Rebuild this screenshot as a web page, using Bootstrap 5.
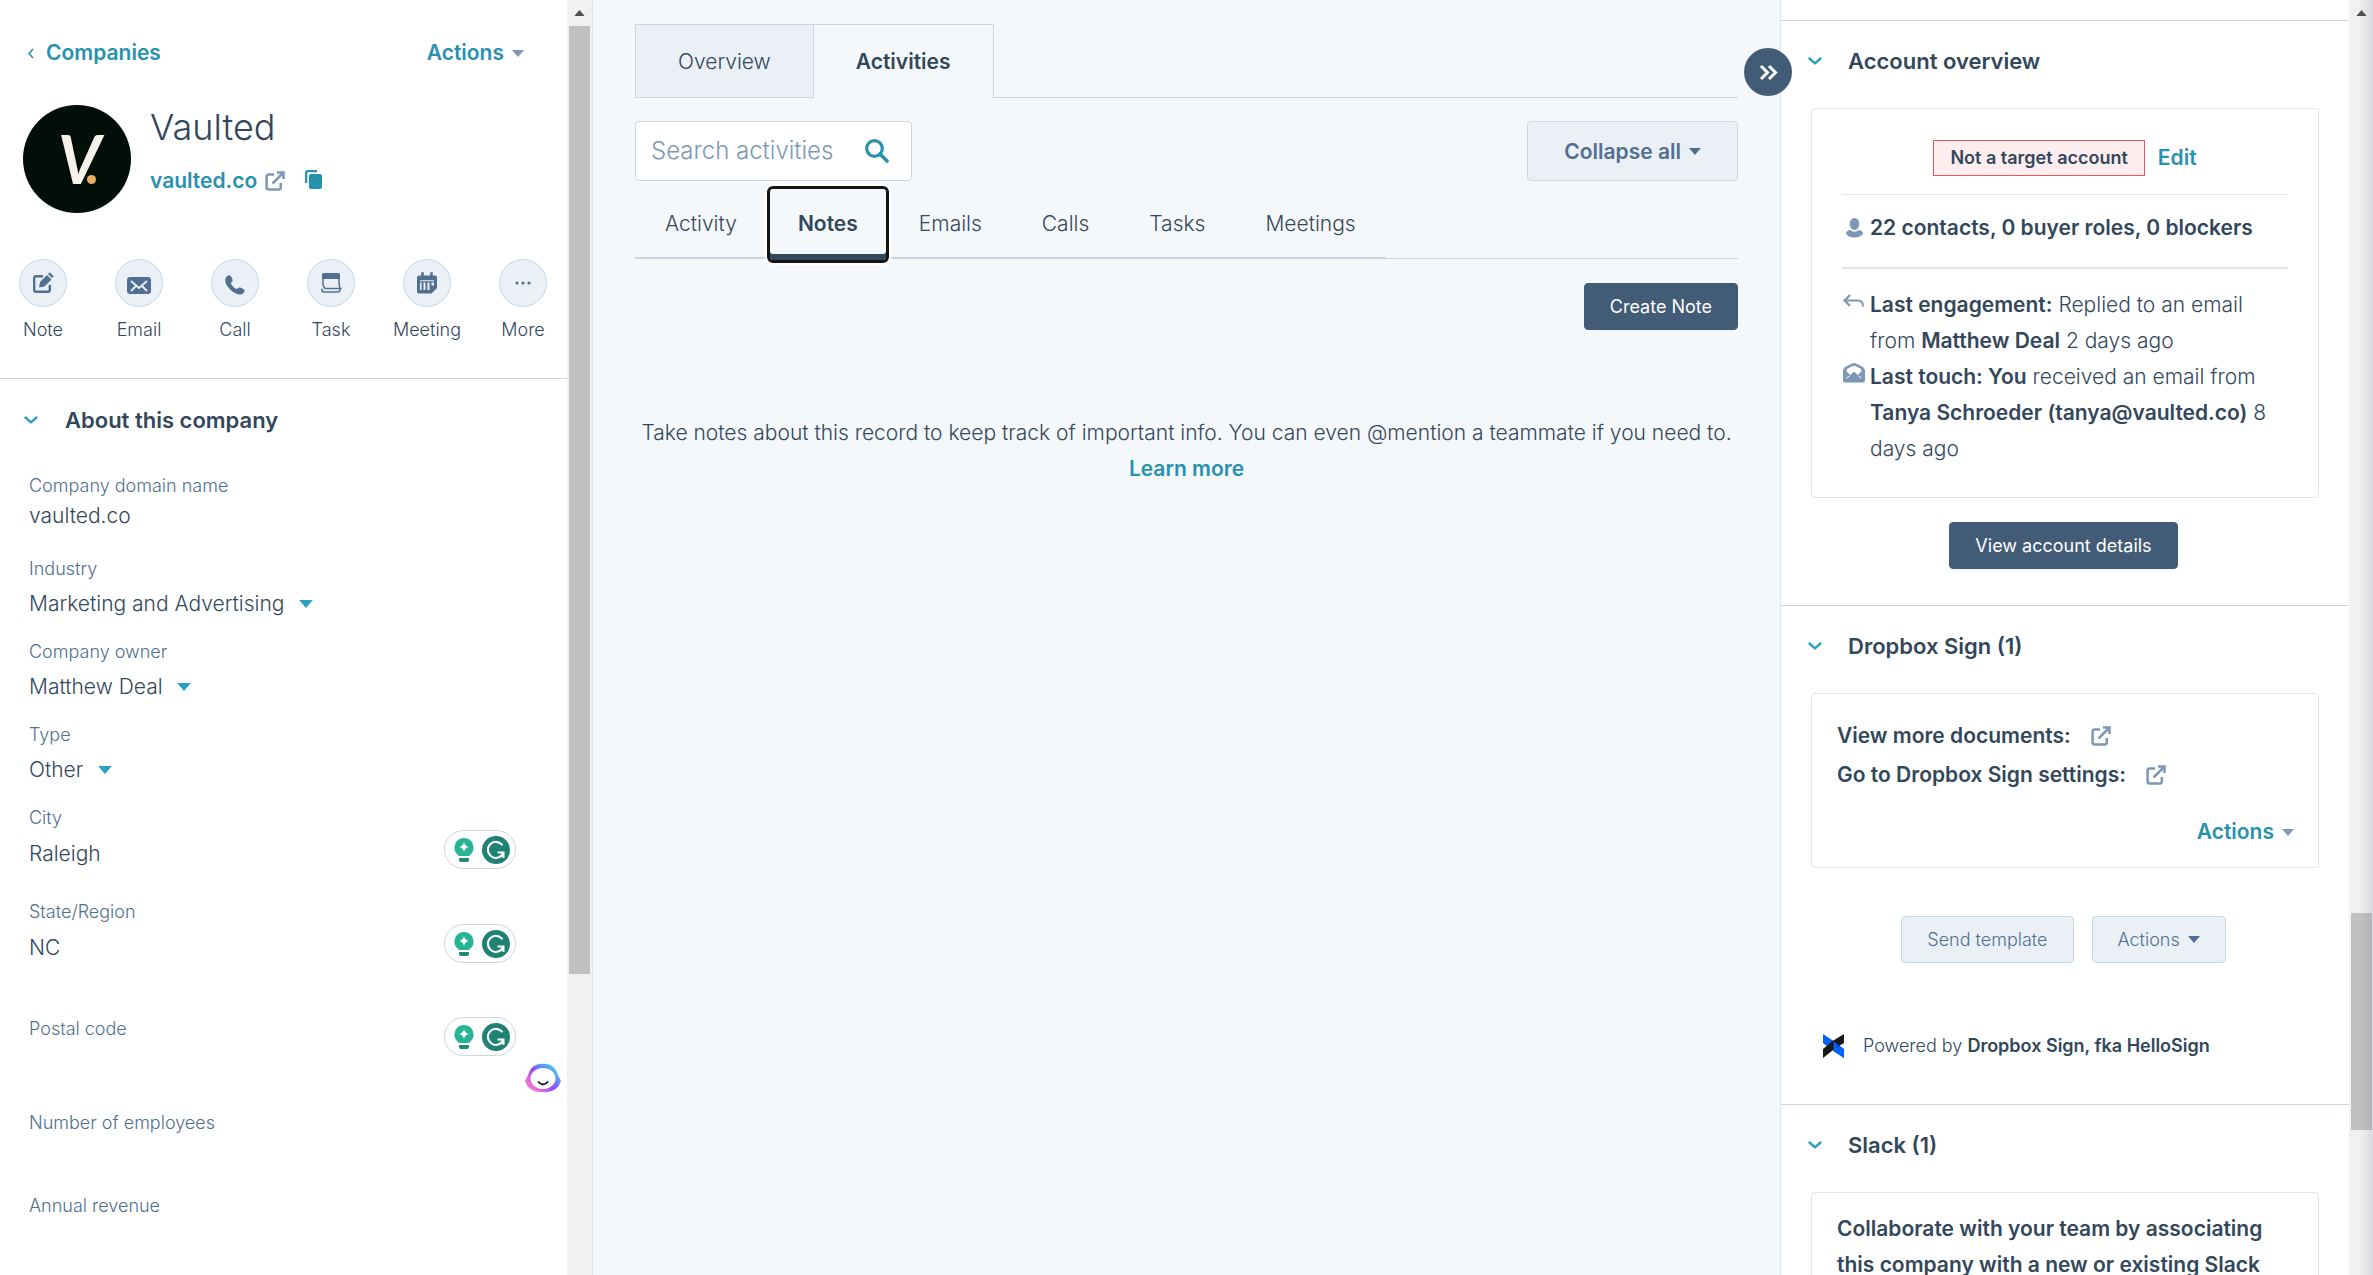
<!DOCTYPE html>
<html lang="en">
<head>
<meta charset="utf-8">
<meta name="viewport" content="width=device-width, initial-scale=1">
<title>Vaulted – Company record</title>
<link href="https://cdn.jsdelivr.net/npm/bootstrap@5.3.0/dist/css/bootstrap.min.css" rel="stylesheet">
<style>
:root{--ink:#33475b;--teal:#2791ae;--muted:#516f90;--line:#cbd6e2;--soft:#dfe3eb;--pale:#eaf0f6;--dark:#425b76;--icon:#7c98b6}
body{font-family:Inter,"Open Sans",sans-serif;font-size:21px;line-height:36px;font-weight:300;color:var(--ink);background:#f5f8fa;overflow:hidden}
b,.strong{font-weight:600}
svg{display:block;flex:none}
a{color:var(--teal);font-weight:600;text-decoration:none}
h1,h2{margin:0;color:var(--ink)}
h1{font-size:36px;line-height:44px;font-weight:300}
h2{font-size:22px;line-height:36px;font-weight:600}
.btn{font-size:18px;line-height:23px;font-weight:300;padding:11px 25px;border-radius:4px;border-width:1px}
.btn-slate{background:var(--dark);border-color:var(--dark);color:#fff;font-weight:400}
.btn-pale{background:var(--pale);border-color:var(--line);color:var(--muted)}
.btn-big{font-size:21px;font-weight:600;padding:17px 36px}
.plain{background:none;border:0;padding:0;color:var(--teal);font-weight:600}
.left-panel{width:567px;background:#fff}
.right-panel{width:569px;background:#fff;padding-top:20px}
.track{width:25px;background:#f1f1f1;padding:0 2px}
.track svg{margin:10px auto}
.track.shaded{width:24px;padding:0 1px 0 2px;background:linear-gradient(90deg,#f1f1f1 40%,#d9dadd)}
.thumb{background:#c1c1c1}
.left-thumb{height:948px}
.right-thumb{height:217px;margin-top:897px;background:linear-gradient(90deg,#c1c1c1 40%,#b2b3b5)}
.edge{border-left:1px solid var(--soft)}
.top-row{padding:35px 43px 0 28px}
.identity{padding:34px 23px 0;gap:19px}
.site{margin-top:14px}
.site .copy{margin-left:20px}
.avatar{width:108px;height:108px;background:#020e08;color:#f6f1eb;font:italic 700 66px/108px Lato,sans-serif;text-align:center;border-radius:50%}
.avatar i{display:inline-block;width:9px;height:9px;border-radius:50%;background:#e8ae5f;margin-left:-14px}
.quick{padding:46px 0 31px}
.quick li{width:96px;flex:none}
.quick button{width:100%;border:0;background:none;padding:0;color:var(--ink);font-size:18px;line-height:24px;font-weight:300}
.disc{width:48px;height:48px;border:1px solid var(--line);border-radius:50%;background:var(--pale);color:#516f90;margin-bottom:11px}
.quick-wrap{margin-left:-5px}
.about{border-top:1px solid var(--line);padding:23px 24px 0}
.about h2{margin-left:27px}
.fields{padding:36px 51px 0 29px}
.field{height:83px}
.field.tall{height:94px}
.field.taller{height:117px}
.field label,.field .name{display:block;font-size:18px;line-height:24px;color:var(--muted)}
.field .value{line-height:30px;margin-top:3px}
.field select,.field input{border:0;padding:0;background:none;color:var(--ink);font-weight:300;font-size:21px;line-height:30px;height:30px;appearance:none;outline:0}
.field input{flex:1 1 0;min-width:0;margin-top:9px}
.field .pick{margin-top:8px;gap:14px}
.pill{width:72px;height:39px;border:1px solid var(--line);border-radius:20px;background:#fff;gap:8px;padding:0 3px 0 9px}
.helper{position:absolute;left:525px;top:1063px}
.center{padding:24px 42px 0}
.tab-bar{height:74px}
.tab-bar a{border:1px solid var(--line);padding:19px 42px 0;color:var(--ink);font-weight:300}
.tab-bar a:first-child{background:var(--pale)}
.tab-bar a.on{border-left:0;border-bottom:0;font-weight:600}
.tab-bar span{border-bottom:1px solid var(--line)}
.tools{margin-top:23px}
.search{width:277px;height:60px;background:#fff;border:1px solid var(--line);border-radius:4px;padding:0 22px 0 15px}
.search input{border:0;background:none;outline:0;min-width:0;flex:1;font-size:24px;font-weight:300;padding:0;color:var(--ink)}
.search input::placeholder{color:var(--icon);opacity:1}
.sub-tabs{margin-top:5px;height:73px;border-bottom:1px solid var(--line)}
.sub-tabs nav{border-bottom:1px solid var(--line)}
.sub-tabs a{color:var(--ink);font-weight:300;padding:20px 30px 0;height:77px}
.sub-tabs a.on{font-weight:600;border:3px solid #141414;border-radius:6px;padding:17px 28px 0;box-shadow:inset 0 -6px #33475b,0 0 0 2px #fff;background:#f5f8fa;z-index:1}
.empty{margin:85px -20px 0}
.toggle{position:absolute;left:-37px;top:48px;width:48px;height:48px;border:0;border-radius:50%;background:var(--dark);z-index:2}
.section{padding:22px 30px 0 27px;border-top:1px solid var(--line)}
.section h2{margin-left:26px}
.panel{border:1px solid var(--soft);border-radius:4px;margin:29px 0 0 3px}
.panel.account{padding:31px 30px 30px}
.panel.docs{padding:22px 24px 17px 25px;line-height:39px;font-weight:600}
.panel.docs .line{gap:20px}
.panel.docs .more{margin-top:20px;line-height:36px}
.panel.slack{padding:18px 25px;font-weight:600}
.badge-row{gap:13px}
.target{border:1px solid #f2545b;background:#fdedee;font-size:18px;line-height:34px;font-weight:600;padding:0 16px}
.rule{border-top:1px solid var(--soft);margin:18px 0 15px}
.rule.thick{border-width:2px;margin:21px 0 18px}
.item{gap:4px}
.item .glyph{width:24px;flex:none;display:flex;justify-content:center;height:36px;align-items:center}
.item .glyph.up{height:28px}
.after-account{padding:24px 0 36px}
.doc-buttons{padding:48px 0 71px;gap:18px}
.powered{font-size:18px;line-height:24px;padding:0 15px 46px;gap:19px}
</style>
</head>
<body class="d-flex vh-100 position-relative">
<svg width="0" height="0" class="position-absolute" aria-hidden="true">
<symbol id="chev" viewBox="0 0 14 8"><path d="M1.500 1.500 7 6.300l5.500-4.800" fill="none" stroke="#2a9fc0" stroke-width="2.400" stroke-linecap="round" stroke-linejoin="round"/></symbol>
<symbol id="tri" viewBox="0 0 12 7"><path d="M0 0h12L6 7z" fill="currentColor"/></symbol>
<symbol id="up" viewBox="0 0 12 7"><path d="M0 7h12L6 0z" fill="currentColor"/></symbol>
<symbol id="ext" viewBox="0 0 20 20"><path d="M9 3.600H3.400a1.800 1.800 0 0 0-1.800 1.800v11.200a1.800 1.800 0 0 0 1.800 1.800H14a1.800 1.800 0 0 0 1.800-1.800v-4.600M7.500 12.500 17.500 2.500M12 1.600h6.500v6.500" fill="none" stroke="#7c98b6" stroke-width="2.500"/></symbol>
<symbol id="bulb" viewBox="0 0 20 28"><path d="M10 2a9.500 9.500 0 0 1 5.500 17.200V20h-11v-.8A9.500 9.500 0 0 1 10 2z" fill="#27b496"/><path d="M5 22h10v2q0 2-2 2H7q-2 0-2-2z" fill="#208c76"/><path d="M10 6q.8 4.200 5 5-4.200.8-5 5-.8-4.200-5-5 4.200-.8 5-5z" fill="#fff"/></symbol>
<symbol id="gee" viewBox="0 0 28 28"><circle cx="14" cy="14" r="14" fill="#208275"/><path d="M20.500 9.300A8 8 0 1 0 21.300 17M15.500 16.500h6V22" fill="none" stroke="#fff" stroke-width="2"/></symbol>
</svg>

<aside class="left-panel flex-shrink-0">
  <div class="top-row d-flex justify-content-between align-items-center">
    <a href="#" class="d-flex align-items-center"><svg width="6" height="11" viewBox="0 0 6 11" class="me-2"><path d="M5 1 1 5.500 5 10" fill="none" stroke="#2791ae" stroke-width="1.600"/></svg><span class="ms-1">Companies</span></a>
    <button class="plain d-flex align-items-center gap-2">Actions <svg width="12" height="7" color="#7c98b6"><use href="#tri"/></svg></button>
  </div>
  <div class="identity d-flex">
    <div class="avatar">V<i></i></div>
    <div>
      <h1>Vaulted</h1>
      <div class="site d-flex align-items-center"><a href="#">vaulted.co</a><svg width="20" height="20" class="ms-2"><use href="#ext"/></svg><svg width="17" height="19" viewBox="0 0 17 19" class="copy mb-1"><path d="M1.200 13V2.500Q1.200 1.200 2.500 1.200H12" fill="none" stroke="#2791ae" stroke-width="2.200"/><rect x="4" y="4" width="13" height="15" rx="2" fill="#2791ae"/></svg></div>
    </div>
  </div>
  <div class="quick-wrap">
  <ul class="quick list-unstyled d-flex m-0 text-center">
    <li><button><span class="disc d-flex align-items-center justify-content-center mx-auto"><svg width="22" height="22" viewBox="0 0 22 22"><path d="M11 4.200H4.200a2 2 0 0 0-2 2v11.600a2 2 0 0 0 2 2h11.600a2 2 0 0 0 2-2V13" fill="none" stroke="currentColor" stroke-width="2.400"/><path d="M7 15.500 8 10l7-7 4.500 4.500-7 7z" fill="currentColor"/><path d="m16 2 1.700-1.700 4 4L20 6z" fill="currentColor"/></svg></span>Note</button></li>
    <li><button><span class="disc d-flex align-items-center justify-content-center mx-auto"><svg width="24" height="17" viewBox="0 0 24 17" class="mt-1"><rect width="24" height="17" rx="3" fill="currentColor"/><path d="m4 4 8 7 8-7M4 14l5-5M20 14l-5-5" fill="none" stroke="#eaf0f6" stroke-width="1.800"/></svg></span>Email</button></li>
    <li><button><span class="disc d-flex align-items-center justify-content-center mx-auto"><svg width="20" height="20" viewBox="0 0 20 20" class="mt-1"><path d="M1 2.500C2 .8 4 0 5 .5c1.500 1 3 4 2.500 5.500-.3 1-1.500 1.300-1.500 2.200 0 1.600 4 5.800 5.800 5.800 1 0 1.300-1.300 2.300-1.500 1.500-.3 5 1.800 5.400 3 .3 1.500-1.500 3.700-3.500 4C10 20.300 0 11 .2 5.500c0-1 .3-2.200.8-3z" fill="currentColor"/></svg></span>Call</button></li>
    <li><button><span class="disc d-flex align-items-center justify-content-center mx-auto"><svg width="21" height="20" viewBox="0 0 21 20"><path d="M1 1.500Q1 0 2.500 0h15Q19 0 19 1.500V6H1z" fill="currentColor"/><path d="M2 5v6q.3 3 2 4.500h15.500q-1.800-2-1.500-10.500M1 15.500v1q0 2.500 2 2.500h14q2 0 2-3" fill="none" stroke="currentColor" stroke-width="1.500"/></svg></span>Task</button></li>
    <li><button><span class="disc d-flex align-items-center justify-content-center mx-auto"><svg width="20" height="22" viewBox="0 0 20 22"><path d="M0 5.500q0-2 2-2h16q2 0 2 2V16l-5.500 5.500H2q-2 0-2-2z" fill="currentColor"/><path d="M5.500.3v5M14.500.3v5" stroke="currentColor" stroke-width="2.600"/><path d="M3 8.300h14v1H3zM3 10.500h1.600v7.500H3zM6.500 10.500h2v7.500h-2zM10.500 10.500h2v7.500h-2zM14.500 10.500H17v3h-2.500z" fill="#eaf0f6"/></svg></span>Meeting</button></li>
    <li><button><span class="disc d-flex align-items-center justify-content-center mx-auto"><svg width="16" height="4" viewBox="0 0 16 4" fill="currentColor"><circle cx="2" cy="2" r="1.600"/><circle cx="8" cy="2" r="1.600"/><circle cx="14" cy="2" r="1.600"/></svg></span>More</button></li>
  </ul>
  </div>
  <section class="about"><div class="d-flex align-items-center"><svg width="14" height="8"><use href="#chev"/></svg><h2>About this company</h2></div></section>
  <div class="fields">
    <div class="field"><span class="name">Company domain name</span><div class="value">vaulted.co</div></div>
    <div class="field"><label for="industry">Industry</label><div class="pick d-flex align-items-center"><select id="industry"><option>Marketing and Advertising</option></select><svg width="14" height="8" color="#2a9fc0"><use href="#tri"/></svg></div></div>
    <div class="field"><label for="owner">Company owner</label><div class="pick d-flex align-items-center"><select id="owner"><option>Matthew Deal</option></select><svg width="14" height="8" color="#2a9fc0"><use href="#tri"/></svg></div></div>
    <div class="field"><label for="kind">Type</label><div class="pick d-flex align-items-center"><select id="kind"><option>Other</option></select><svg width="14" height="8" color="#2a9fc0"><use href="#tri"/></svg></div></div>
    <div class="field tall"><label for="city">City</label><div class="d-flex"><input id="city" value="Raleigh"><span class="pill d-flex align-items-center"><svg width="20" height="28"><use href="#bulb"/></svg><svg width="28" height="28"><use href="#gee"/></svg></span></div></div>
    <div class="field taller"><label for="region">State/Region</label><div class="d-flex"><input id="region" value="NC"><span class="pill d-flex align-items-center"><svg width="20" height="28"><use href="#bulb"/></svg><svg width="28" height="28"><use href="#gee"/></svg></span></div></div>
    <div class="field tall d-flex"><label for="zip">Postal code</label><input id="zip"><span class="pill d-flex align-items-center"><svg width="20" height="28"><use href="#bulb"/></svg><svg width="28" height="28"><use href="#gee"/></svg></span></div>
    <div class="field"><span class="name">Number of employees</span></div>
    <div class="field"><span class="name">Annual revenue</span></div>
  </div>
</aside>
<div class="track flex-shrink-0"><svg width="11" height="6" color="#505050"><use href="#up"/></svg><div class="thumb left-thumb"></div></div>
<svg class="helper" width="36" height="30" viewBox="0 0 36 30"><defs><linearGradient id="ring" x1="0.100" y1="0.900" x2="0.900" y2="0.200"><stop offset="0" stop-color="#ff7ac8"/><stop offset=".25" stop-color="#d867e0"/><stop offset=".5" stop-color="#9a48f5"/><stop offset=".75" stop-color="#5f8cf8"/><stop offset="1" stop-color="#4cc9f8"/></linearGradient></defs><path d="M12 1.500Q18 0 24 1.500 31 4 33 12l3 6-2.500 5.500Q27 30 18 29 9 30 2.500 23.500L0 18l3-6Q5 4 12 1.500z" fill="url(#ring)"/><ellipse cx="18" cy="15.500" rx="12.500" ry="10.500" fill="#fff"/><path d="M13 18.500q5 6 10 0" fill="none" stroke="#111" stroke-width="1.800"/></svg>

<main class="center edge flex-grow-1">
  <nav class="tab-bar d-flex"><a href="#">Overview</a><a href="#" class="on">Activities</a><span class="flex-grow-1"></span></nav>
  <div class="tools d-flex justify-content-between">
    <div class="search d-flex align-items-center"><input type="text" placeholder="Search activities" aria-label="Search activities"><svg width="24" height="24" viewBox="0 0 24 24"><circle cx="9.500" cy="9.500" r="7.800" fill="none" stroke="#2791ae" stroke-width="3.200"/><path d="m15 15 7 7" stroke="#2791ae" stroke-width="3.600" stroke-linecap="round"/></svg></div>
    <button class="btn btn-pale btn-big d-flex align-items-center gap-2">Collapse all <svg width="12" height="7"><use href="#tri"/></svg></button>
  </div>
  <div class="sub-tabs d-flex"><nav class="d-flex"><a href="#">Activity</a><a href="#" class="on">Notes</a><a href="#">Emails</a><a href="#">Calls</a><a href="#">Tasks</a><a href="#">Meetings</a></nav></div>
  <div class="text-end mt-4"><button class="btn btn-slate">Create Note</button></div>
  <p class="empty text-center">Take notes about this record to keep track of important info. You can even @mention a teammate if you need to.<br><a href="#">Learn more</a></p>
</main>

<aside class="right-panel edge flex-shrink-0 position-relative">
  <button class="toggle d-flex align-items-center justify-content-center" aria-label="Collapse panel"><svg width="19" height="17" viewBox="0 0 19 17"><path d="m2 2 6.500 6.500L2 15M10 2l6.500 6.500L10 15" fill="none" stroke="#fff" stroke-width="3"/></svg></button>
  <section class="section">
    <div class="d-flex align-items-center"><svg width="14" height="8"><use href="#chev"/></svg><h2>Account overview</h2></div>
    <div class="panel account">
      <div class="badge-row d-flex align-items-center justify-content-center"><span class="target">Not a target account</span><a href="#">Edit</a></div>
      <div class="rule"></div>
      <div class="item d-flex"><span class="glyph"><svg width="17" height="20" viewBox="0 0 17 20"><ellipse cx="8.500" cy="6" rx="4.800" ry="6" fill="#7c98b6"/><path d="M0 15.500q0-2.500 4-3.500 4.500 3.500 9 0 4 1 4 3.500Q15 19.500 8.500 19.500T0 15.500z" fill="#7c98b6"/></svg></span><b>22 contacts, 0 buyer roles, 0 blockers</b></div>
      <div class="rule thick"></div>
      <div class="item d-flex"><span class="glyph up"><svg width="22" height="14" viewBox="0 0 22 14"><path d="M7 1 1.500 6.500 7 12M2 6.500h13q5 0 5 6" fill="none" stroke="#7c98b6" stroke-width="2.200"/></svg></span><div><b>Last engagement:</b> Replied to an email<br>from <b>Matthew Deal</b> 2 days ago</div></div>
      <div class="item d-flex"><span class="glyph up"><svg width="22" height="20" viewBox="0 0 22 20"><path d="M0 7 2 4l7.500-3.700h3L20 4l2 3v10q0 2.500-2.500 2.500h-17Q0 19.500 0 17z" fill="#7c98b6"/><path d="M4 8.500 4.500 6 11 3l6.500 3 .5 2.500-3.500 3L11 8l-3.500 3.500zM3.500 15l3-2M18.500 15l-3-2" fill="#fff" stroke="#fff" stroke-width="1"/></svg></span><div><b>Last touch: You</b> received an email from<br><b>Tanya Schroeder (tanya@vaulted.co)</b> 8<br>days ago</div></div>
    </div>
    <div class="after-account text-center d-flex justify-content-center"><button class="btn btn-slate">View account details</button></div>
  </section>
  <section class="section">
    <div class="d-flex align-items-center"><svg width="14" height="8"><use href="#chev"/></svg><h2>Dropbox Sign (1)</h2></div>
    <div class="panel docs">
      <div class="line d-flex align-items-center">View more documents: <svg width="20" height="20"><use href="#ext"/></svg></div>
      <div class="line d-flex align-items-center">Go to Dropbox Sign settings: <svg width="20" height="20"><use href="#ext"/></svg></div>
      <div class="more d-flex justify-content-end"><button class="plain d-flex align-items-center gap-2">Actions <svg width="12" height="7" color="#7c98b6"><use href="#tri"/></svg></button></div>
    </div>
    <div class="doc-buttons d-flex justify-content-center"><button class="btn btn-pale">Send template</button><button class="btn btn-pale d-flex align-items-center gap-2">Actions <svg width="12" height="7"><use href="#tri"/></svg></button></div>
    <div class="powered d-flex align-items-center"><svg width="21" height="24" viewBox="0 0 21 24"><path d="M0 0 10.500 7 21 15v9L10.500 17 0 9z" fill="#0061fe"/><path d="M21 0v9l-9 5.500L0 24v-9l9.500-8z" fill="#1a1918"/><path d="m10.500 7.500 5.500 4-4 2.800L21 15v9l-10.500-7z" fill="#0061fe"/></svg><span>Powered by <b>Dropbox Sign, fka HelloSign</b></span></div>
  </section>
  <section class="section">
    <div class="d-flex align-items-center"><svg width="14" height="8"><use href="#chev"/></svg><h2>Slack (1)</h2></div>
    <div class="panel slack">Collaborate with your team by associating<br>this company with a new or existing Slack</div>
  </section>
</aside>
<div class="track shaded flex-shrink-0"><svg width="11" height="6" color="#505050"><use href="#up"/></svg><div class="thumb right-thumb"></div></div>
<script src="https://cdn.jsdelivr.net/npm/bootstrap@5.3.0/dist/js/bootstrap.bundle.min.js"></script>
</body>
</html>
